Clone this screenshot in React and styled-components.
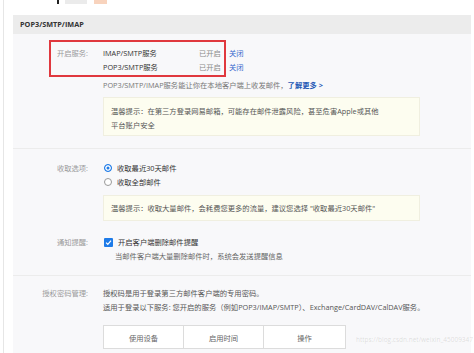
import React from "react";
import styled, { createGlobalStyle } from "styled-components";

const GlobalStyle = createGlobalStyle`
  html, body {
    margin: 0;
    padding: 0;
    background: #fff;
  }
  body {
    font-family: "Open Sans", "Noto Sans CJK SC", sans-serif;
    font-size: 7.3px;
    color: #333;
  }
`;

const Page = styled.div`
  position: relative;
  width: 474px;
  height: 353px;
  overflow: hidden;
  box-sizing: border-box;
  margin-left: 3px;
  border-left: 1px solid #e6e6e6;
`;

const TopStrip = styled.div`
  display: flex;
  align-items: flex-start;
  height: 15px;
  padding-left: 53px;
  gap: 4px;
`;

const Tick = styled.div`
  width: ${(p) => p.w}px;
  height: 4px;
  background: ${(p) => p.bg};
  margin-right: ${(p) => p.mr || 0}px;
`;

const Panel = styled.div`
  margin-left: 9px;
  width: 458px;
  background: #f8f8fa;
  height: 338px;
`;

const PanelHead = styled.div`
  height: 19px;
  line-height: 19px;
  background: #ececec;
  padding-left: 7px;
  font-size: 7.3px;
  font-weight: bold;
  color: #333;
`;

const Section = styled.div`
  position: relative;
  padding: ${(p) => p.pt}px 0 ${(p) => p.pb}px;
  border-bottom: ${(p) => (p.divider ? "1px solid #ececec" : "none")};
`;

const Field = styled.div`
  display: grid;
  grid-template-columns: 75px 1fr;
  column-gap: 15px;
  line-height: 14px;
`;

const Label = styled.div`
  text-align: right;
  color: #9a9a9a;
`;

const Content = styled.div`
  display: flex;
  flex-direction: column;
`;

const ServiceRow = styled.div`
  display: flex;
  align-items: center;
  height: 14px;
`;

const ServiceName = styled.span`
  width: 96px;
  color: #333;
`;

const Status = styled.span`
  color: #8a8a8a;
`;

const Sep = styled.span`
  color: #bbb;
  margin: 0 2px;
`;

const Link = styled.a`
  color: ${(p) => (p.strong ? "#2357b5" : "#3366cc")};
  font-weight: ${(p) => (p.strong ? "bold" : "normal")};
  text-decoration: none;
  cursor: pointer;
`;

const Desc = styled.div`
  color: #777;
  margin-top: 4px;
`;

const Tip = styled.div`
  width: 317px;
  box-sizing: border-box;
  margin-top: ${(p) => p.mt}px;
  padding: ${(p) => (p.twoLine ? "6px 7px 3px" : "5px 7px")};
  background: #fdfdf0;
  border: 1px solid #f0efe0;
  color: #555;
  line-height: 14px;
`;

const Highlight = styled.div`
  position: absolute;
  left: 36px;
  top: 6px;
  width: 177px;
  height: 37px;
  box-sizing: border-box;
  border: 2px solid #e0383e;
  pointer-events: none;
`;

const Choice = styled.label`
  display: flex;
  align-items: center;
  height: 14px;
  color: #333;
`;

const Radio = styled.span`
  width: 8px;
  height: 8px;
  border-radius: 50%;
  box-sizing: border-box;
  margin: 0 5px 0 1px;
  border: 1px solid ${(p) => (p.on ? "#1e7be8" : "#999")};
  background: ${(p) => (p.on ? "#1e7be8" : "#fff")};
  box-shadow: ${(p) => (p.on ? "inset 0 0 0 1.5px #fff" : "none")};
`;

const Check = styled.span`
  width: 9px;
  height: 9px;
  border-radius: 1px;
  background: #1e7be8;
  margin: 0 5px 0 1px;
  display: flex;
  align-items: center;
  justify-content: center;
`;

const SubNote = styled.div`
  color: #666;
  padding-left: 12px;
`;

const Plain = styled.div`
  color: #555;
`;

const Table = styled.div`
  display: grid;
  grid-template-columns: 80px 80px 82px;
  width: 242px;
  margin-top: 11px;
  border-left: 1px solid #dcdcdc;
  background: #fff;
`;

const Th = styled.div`
  height: 24px;
  line-height: 24px;
  text-align: center;
  color: #666;
  border-top: 1px solid #dcdcdc;
  border-right: 1px solid #dcdcdc;
  border-bottom: 1px solid #dcdcdc;
  box-sizing: border-box;
`;

const Watermark = styled.div`
  position: absolute;
  right: 4px;
  bottom: 9px;
  font-size: 6.5px;
  color: rgba(120, 120, 120, 0.22);
`;

const services = [
  { name: "IMAP/SMTP服务", status: "已开启" },
  { name: "POP3/SMTP服务", status: "已开启" },
];

export default function App() {
  return (
    <>
      <GlobalStyle />
      <Page>
        <TopStrip>
          <Tick w={2} bg="#222" mr={2} />
          <Tick w={22} bg="#ebebeb" mr={3} />
          <Tick w={13} bg="#f8d3bd" />
        </TopStrip>
        <Panel>
          <PanelHead>POP3/SMTP/IMAP</PanelHead>

          <Section pt={12} pb={12} divider>
            <Field>
              <Label>开启服务:</Label>
              <Content>
                {services.map((s) => (
                  <ServiceRow key={s.name}>
                    <ServiceName>{s.name}</ServiceName>
                    <Status>{s.status}</Status>
                    <Sep>|</Sep>
                    <Link>关闭</Link>
                  </ServiceRow>
                ))}
                <Desc>
                  POP3/SMTP/IMAP服务能让你在本地客户端上收发邮件，
                  <Link strong>了解更多 &gt;</Link>
                </Desc>
                <Tip mt={5} twoLine>
                  温馨提示：在第三方登录网易邮箱，可能存在邮件泄露风险，甚至危害Apple或其他
                  <br />
                  平台账户安全
                </Tip>
              </Content>
            </Field>
            <Highlight />
          </Section>

          <Section pt={12} pb={0}>
            <Field>
              <Label>收取选项:</Label>
              <Content>
                <Choice>
                  <Radio on />
                  收取最近30天邮件
                </Choice>
                <Choice>
                  <Radio />
                  收取全部邮件
                </Choice>
                <Tip mt={6}>
                  温馨提示：收取大量邮件，会耗费您更多的流量，建议您选择 "收取最近30天邮件"
                </Tip>
              </Content>
            </Field>
          </Section>

          <Section pt={14} pb={12} divider>
            <Field>
              <Label>通知提醒:</Label>
              <Content>
                <Choice>
                  <Check>
                    <svg width="7" height="7" viewBox="0 0 10 10">
                      <path d="M1.5 5.2 L4 7.6 L8.6 2.4" fill="none" stroke="#fff" strokeWidth="1.8" />
                    </svg>
                  </Check>
                  开启客户端删除邮件提醒
                </Choice>
                <SubNote>当邮件客户端大量删除邮件时，系统会发送提醒信息</SubNote>
              </Content>
            </Field>
          </Section>

          <Section pt={10} pb={0}>
            <Field>
              <Label>授权密码管理:</Label>
              <Content>
                <Plain>授权码是用于登录第三方邮件客户端的专用密码。</Plain>
                <Plain>
                  适用于登录以下服务: 您开启的服务（例如POP3/IMAP/SMTP）、Exchange/CardDAV/CalDAV服务。
                </Plain>
                <Table>
                  <Th>使用设备</Th>
                  <Th>启用时间</Th>
                  <Th>操作</Th>
                </Table>
              </Content>
            </Field>
          </Section>
        </Panel>
        <Watermark>https://blog.csdn.net/weixin_45009347</Watermark>
      </Page>
    </>
  );
}
